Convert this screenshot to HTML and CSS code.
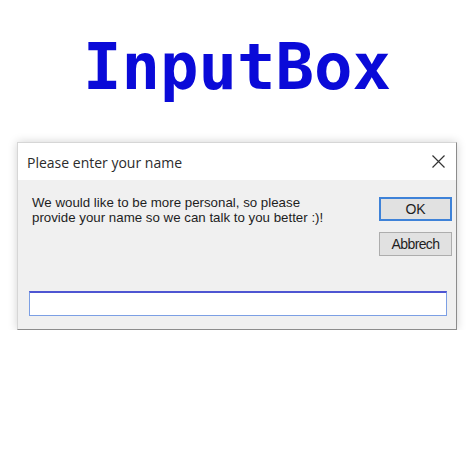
FILE: index.html
```html
<!DOCTYPE html>
<html lang="en">
<head>
  <meta charset="UTF-8" />
  <meta name="viewport" content="width=device-width, initial-scale=1.0"/>
  <title>InputBox</title>
  <link rel="stylesheet" href="styles.css">
</head>
<body>
  <h1 class="logo">InputBox</h1>

  <div class="dialog">
    <div class="titlebar">
      <span class="caption">Please enter your name</span>
      <svg class="close" width="13" height="13" viewBox="0 0 13 13">
        <path d="M0.5 0.5 L12.5 12.5 M12.5 0.5 L0.5 12.5" stroke="#333" stroke-width="1.2" fill="none"/>
      </svg>
    </div>

    <div class="content">
      <div class="top">
        <p class="message">We would like to be more personal, so please<br>provide your name so we can talk to you better :)!</p>
        <div class="buttons">
          <button class="btn default">OK</button>
          <button class="btn">Abbrech</button>
        </div>
      </div>
      <input type="text" class="answer" />
    </div>
  </div>
</body>
</html>
```

FILE: styles.css
```css
* {
  box-sizing: border-box;
}

body {
  margin: 0;
  background: #fff;
}

.logo {
  margin: 30px 0 0;
  font-family: 'DejaVu Sans Mono', monospace;
  font-weight: bold;
  font-size: 64px;
  line-height: normal;
  color: #0a0ad8;
  text-align: center;
  height: 112px;
}

.dialog {
  width: 440px;
  margin-left: 17px;
  background: #f0f0f0;
  border: 1px solid #d6d6d6;
  border-right-color: #8c8c8c;
  border-bottom-color: #8c8c8c;
  box-shadow: 0 0 9px rgba(0, 0, 0, 0.18);
}

.titlebar {
  height: 37px;
  background: #fff;
  display: flex;
  align-items: center;
  justify-content: space-between;
  padding: 0 11px 0 9px;
}

.caption {
  font-family: 'Open Sans', 'Noto Sans', sans-serif;
  font-size: 14px;
  color: #2b2b2b;
  margin-top: 1px;
}

.content {
  display: flex;
  flex-direction: column;
  padding: 15px 4px 13px 11px;
}

.top {
  display: flex;
  align-items: flex-start;
}

.message {
  flex: 1;
  margin: 0 0 0 3px;
  font-family: 'Liberation Sans', Arial, sans-serif;
  font-size: 13.3px;
  line-height: 15px;
  color: #1e1e1e;
}

.buttons {
  display: flex;
  flex-direction: column;
  gap: 11px;
  margin-top: 2px;
}

.btn {
  width: 73px;
  height: 24px;
  padding: 0;
  background: #e1e1e1;
  border: 1px solid #adadad;
  font-family: 'Liberation Sans', Arial, sans-serif;
  font-size: 14px;
  color: #1e1e1e;
  letter-spacing: -0.6px;
}

.btn.default {
  border: 2px solid #3e82d8;
  letter-spacing: 0;
}

.answer {
  margin: 35px 5px 0 0;
  height: 25px;
  background: #fff;
  border: 1px solid #7c9fe4;
  border-top: 2px solid #4e55d2;
  outline: none;
}
```
